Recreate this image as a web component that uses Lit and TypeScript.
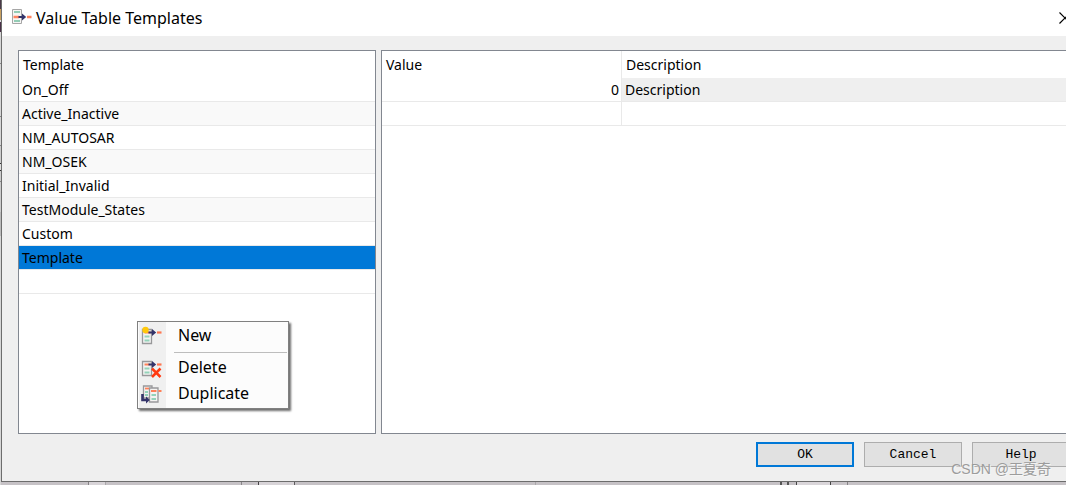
import { LitElement, html, css, svg } from "lit";
import { customElement, property, state } from "lit/decorators.js";
import { classMap } from "lit/directives/class-map.js";

type IconName = "table" | "new" | "delete" | "duplicate";

// Each icon is a sheet with alternating rows and an arrow leading out of it.
const icons = {
  table: svg`
    <path d="M1.500 1.500h9v14h-9z" fill="#f7f5f4" stroke="#a6a6a6"/>
    <path d="M3 4h6M3 13h6" stroke="#93ccb5" stroke-width="2"/>
    <path d="M2.500 9h5.500M16 9h4.500" stroke="#ff8460" stroke-width="2.400"/>
    <path d="M7.500 9h5" stroke="#34346a" stroke-width="2"/>
    <path d="M11 5.500l4.200 3.500-4.200 3.500z" fill="#34346a"/>`,
  new: svg`
    <path d="M1.500 3.500h9v14h-9z" fill="#f4f3f2" stroke="#98989a" stroke-width="1.300"/>
    <path d="M3.500 6.500h6" stroke="#ff8058" stroke-width="2"/>
    <path d="M3.500 10.500h5M3.500 14.500h5" stroke="#94d3ba" stroke-width="2"/>
    <circle cx="4.500" cy="4" r="3.200" fill="#ffc80a"/>
    <path d="M7.500 6.500h4.500" stroke="#34346a" stroke-width="2"/>
    <path d="M11 3l4.200 3.500-4.200 3.500z" fill="#34346a"/>
    <path d="M16 6.500h4.500" stroke="#ff7650" stroke-width="2.200"/>`,
  delete: svg`
    <path d="M1.500 3.500h9v14h-9z" fill="#f4f3f2" stroke="#98989a" stroke-width="1.300"/>
    <path d="M3.500 6.500h5" stroke="#ff8058" stroke-width="2"/>
    <path d="M3.500 10.500h5M3.500 14.500h5" stroke="#94d3ba" stroke-width="2"/>
    <path d="M7.500 6.500h4.500" stroke="#34346a" stroke-width="2"/>
    <path d="M11 3l4.200 3.500-4.200 3.500z" fill="#34346a"/>
    <path d="M16 6.500h4.500" stroke="#ff7650" stroke-width="2.200"/>
    <path d="M11 10.500l8.500 8.500M19.500 10.500l-8.500 8.500" stroke="#ff3a12" stroke-width="2.500"/>`,
  duplicate: svg`
    <path d="M2.500 2h8.500v12h-8.500z" fill="#f4f3f2" stroke="#98989a" stroke-width="1.300"/>
    <path d="M4 4.500h4" stroke="#ff8058" stroke-width="1.800"/>
    <path d="M4 8h3M4 11h3" stroke="#94d3ba" stroke-width="1.800"/>
    <path d="M8.500 4h8.500v14h-8.500z" fill="#f4f3f2" stroke="#98989a" stroke-width="1.300"/>
    <path d="M10 7h5.500M17.500 7h3" stroke="#ff8058" stroke-width="2.200"/>
    <path d="M10.500 11h4.500M10.500 15h4.500" stroke="#94d3ba" stroke-width="2"/>
    <path d="M1.500 10v6h4" fill="none" stroke="#34346a" stroke-width="2.600"/>
    <path d="M5 12.500l3.800 3.500-3.800 3.500z" fill="#34346a"/>`,
};

@customElement("table-icon")
class TableIcon extends LitElement {
  static styles = css`
    :host { display: block; width: 21px; height: 20px; }
    svg { display: block; }
  `;
  @property() name: IconName = "table";
  render() {
    return html`<svg width="21" height="20" viewBox="0 0 21 20" aria-hidden="true">${icons[this.name]}</svg>`;
  }
}

@customElement("context-menu")
class ContextMenu extends LitElement {
  static styles = css`
    :host {
      display: block;
      box-sizing: border-box;
      width: 152px;
      padding: 1px;
      border: 1px solid #808080;
      background: linear-gradient(to right, #fcfcfc 1px, #f0f0f0 1px 28px, #fcfcfc 28px);
      box-shadow: 2px 2px 2px #6f6f6f;
      font: 16px/24px "Noto Sans", "Open Sans", sans-serif;
    }
    .item {
      display: flex;
      align-items: flex-start;
      gap: 16px;
      width: 100%;
      height: 26px;
      padding: 0 0 0 2px;
      border: 0;
      background: none;
      color: #000;
      font: inherit;
      text-align: left;
    }
    .item table-icon { padding-top: 3px; }
    .rule {
      height: 1px;
      margin: 3px 0 2px 35px;
      border: 0;
      background: #bdbdbd;
    }
  `;
  render() {
    return html`
      <button class="item" role="menuitem"><table-icon name="new"></table-icon>New</button>
      <hr class="rule">
      <button class="item" role="menuitem"><table-icon name="delete"></table-icon>Delete</button>
      <button class="item" role="menuitem"><table-icon name="duplicate"></table-icon>Duplicate</button>
    `;
  }
}

@customElement("app-root")
class AppRoot extends LitElement {
  static styles = css`
    :host {
      display: flex;
      flex-direction: column;
      position: relative;
      box-sizing: border-box;
      min-height: 100vh;
      padding: 0 0 3px 1px;
      overflow: hidden;
      background:
        linear-gradient(to right, #0000 88px, #858285 88px 89px, #d8d4d8 89px 105px, #aaa7aa 105px 106px,
          #0000 106px 241px, #8a878a 241px 242px, #c9c5c9 242px 258px, #454345 258px 259px, #d8d4d8 259px 294px,
          #5c5a5c 294px 295px, #0000 295px 535px, #aaa7aa 535px 536px, #0000 536px 780px, #555 780px 782px,
          #0000 782px 787px, #555 787px 789px, #0000 789px 796px, #444 796px 797px, #dad6da 797px 830px,
          #444 830px 831px, #c9c5c9 831px 847px, #858285 847px 848px, #0000 848px) bottom / 100% 3px no-repeat,
        linear-gradient(#4a3a48 9px, #c8a060 9px 20px, #ddd 20px 22px, #4a3048 22px 32px, #d6d6d6 32px 63px,
          #888 63px 64px, #d6d6d6 64px 116px, #888 116px 117px, #d6d6d6 117px 145px, #888 145px 146px,
          #ccc 146px 163px, #333 163px 164px, #ddd 164px 170px, #333 170px 171px, #ccc 171px 181px,
          #888 181px 182px, #ccc 182px 212px, #bbb 212px 236px, #d6d6d6 236px) left / 1px 100% no-repeat,
        #c6c2c6;
      color: #000;
      font: 14px/24px "Noto Sans", "Open Sans", sans-serif;
    }
    /* The window runs past the right edge of the view. */
    .dialog {
      display: flex;
      flex: 1;
      flex-direction: column;
      margin-right: -20px;
      border: solid #6d6d6d;
      border-width: 0 1px 1px;
      background: #efefef;
    }
    .titlebar {
      display: flex;
      align-items: center;
      gap: 4px;
      height: 36px;
      padding: 0 14px 0 9px;
      background: #fff;
    }
    .title {
      flex: 1;
      margin: 0;
      font: 16px/24px "Noto Sans", "Open Sans", sans-serif;
    }
    .close {
      display: flex;
      padding: 0;
      border: 0;
      background: none;
    }
    .panels {
      display: flex;
      flex: 1;
      gap: 5px;
      padding: 14px 15px 0 16px;
    }
    .panel {
      position: relative;
      box-sizing: border-box;
      border: 1px solid #828790;
      background: #fff;
    }
    .templates { flex: 0 0 358px; }
    .values { flex: 1; }
    table {
      width: 100%;
      border-spacing: 0;
      table-layout: fixed;
    }
    th, td {
      box-sizing: border-box;
      height: 24px;
      padding: 0 3px;
      border-bottom: 1px solid #e9e9e9;
      line-height: 23px;
      font-weight: 400;
      text-align: left;
    }
    th {
      height: 27px;
      padding: 0 4px;
      border-bottom: 0;
    }
    .striped td { background: #f9f9f9; }
    .selected td { background: #0078d7; }
    .number { width: 240px; border-right: 1px solid #e9e9e9; }
    td.number { padding-right: 2px; text-align: right; }
    .filled { background: #efefef; }
    .menu {
      position: absolute;
      top: 270px;
      left: 118px;
    }
    .actions {
      display: flex;
      justify-content: flex-end;
      gap: 10px;
      padding: 8px 15px 14px;
    }
    .action {
      width: 98px;
      height: 25px;
      padding: 0;
      border: 1px solid #adadad;
      background: #e1e1e1;
      color: #000;
      font: 13px/16px "Liberation Mono", monospace;
    }
    .default { border: 2px solid #0078d7; }
    .watermark {
      position: absolute;
      right: 15px;
      bottom: 4px;
      color: #9c9c9c;
      font: 14px/24px "Liberation Sans", "Noto Sans CJK SC", sans-serif;
      text-shadow: 1px 1px 0 #f6f6f6;
    }
  `;

  @state() private selected = "Template";
  private templates = ["On_Off", "Active_Inactive", "NM_AUTOSAR", "NM_OSEK", "Initial_Invalid", "TestModule_States", "Custom", "Template"];

  private row(name: string, index: number) {
    const selected = name === this.selected;
    return html`
      <tr class=${classMap({ selected, striped: !selected && index % 2 === 1 })} @click=${() => (this.selected = name)}>
        <td>${name}</td>
      </tr>`;
  }

  render() {
    return html`
      <section class="dialog" role="dialog" aria-labelledby="title">
        <header class="titlebar">
          <table-icon name="table"></table-icon>
          <h1 class="title" id="title">Value Table Templates</h1>
          <button class="close" aria-label="Close">
            <svg width="12" height="12" viewBox="0 0 12 12"><path d="M.5 .5l11 11M11.500 .5l-11 11" stroke="#000" stroke-width="1.200"/></svg>
          </button>
        </header>
        <main class="panels">
          <div class="panel templates">
            <table>
              <thead><tr><th>Template</th></tr></thead>
              <tbody>${this.templates.map((name, i) => this.row(name, i))}<tr><td></td></tr></tbody>
            </table>
            <context-menu class="menu" role="menu"></context-menu>
          </div>
          <div class="panel values">
            <table>
              <thead><tr><th class="number">Value</th><th>Description</th></tr></thead>
              <tbody>
                <tr><td class="number">0</td><td class="filled">Description</td></tr>
                <tr><td class="number"></td><td></td></tr>
              </tbody>
            </table>
          </div>
        </main>
        <footer class="actions">
          <button class="action default">OK</button>
          <button class="action">Cancel</button>
          <button class="action">Help</button>
        </footer>
      </section>
      <span class="watermark">CSDN @王夏奇</span>
    `;
  }
}
